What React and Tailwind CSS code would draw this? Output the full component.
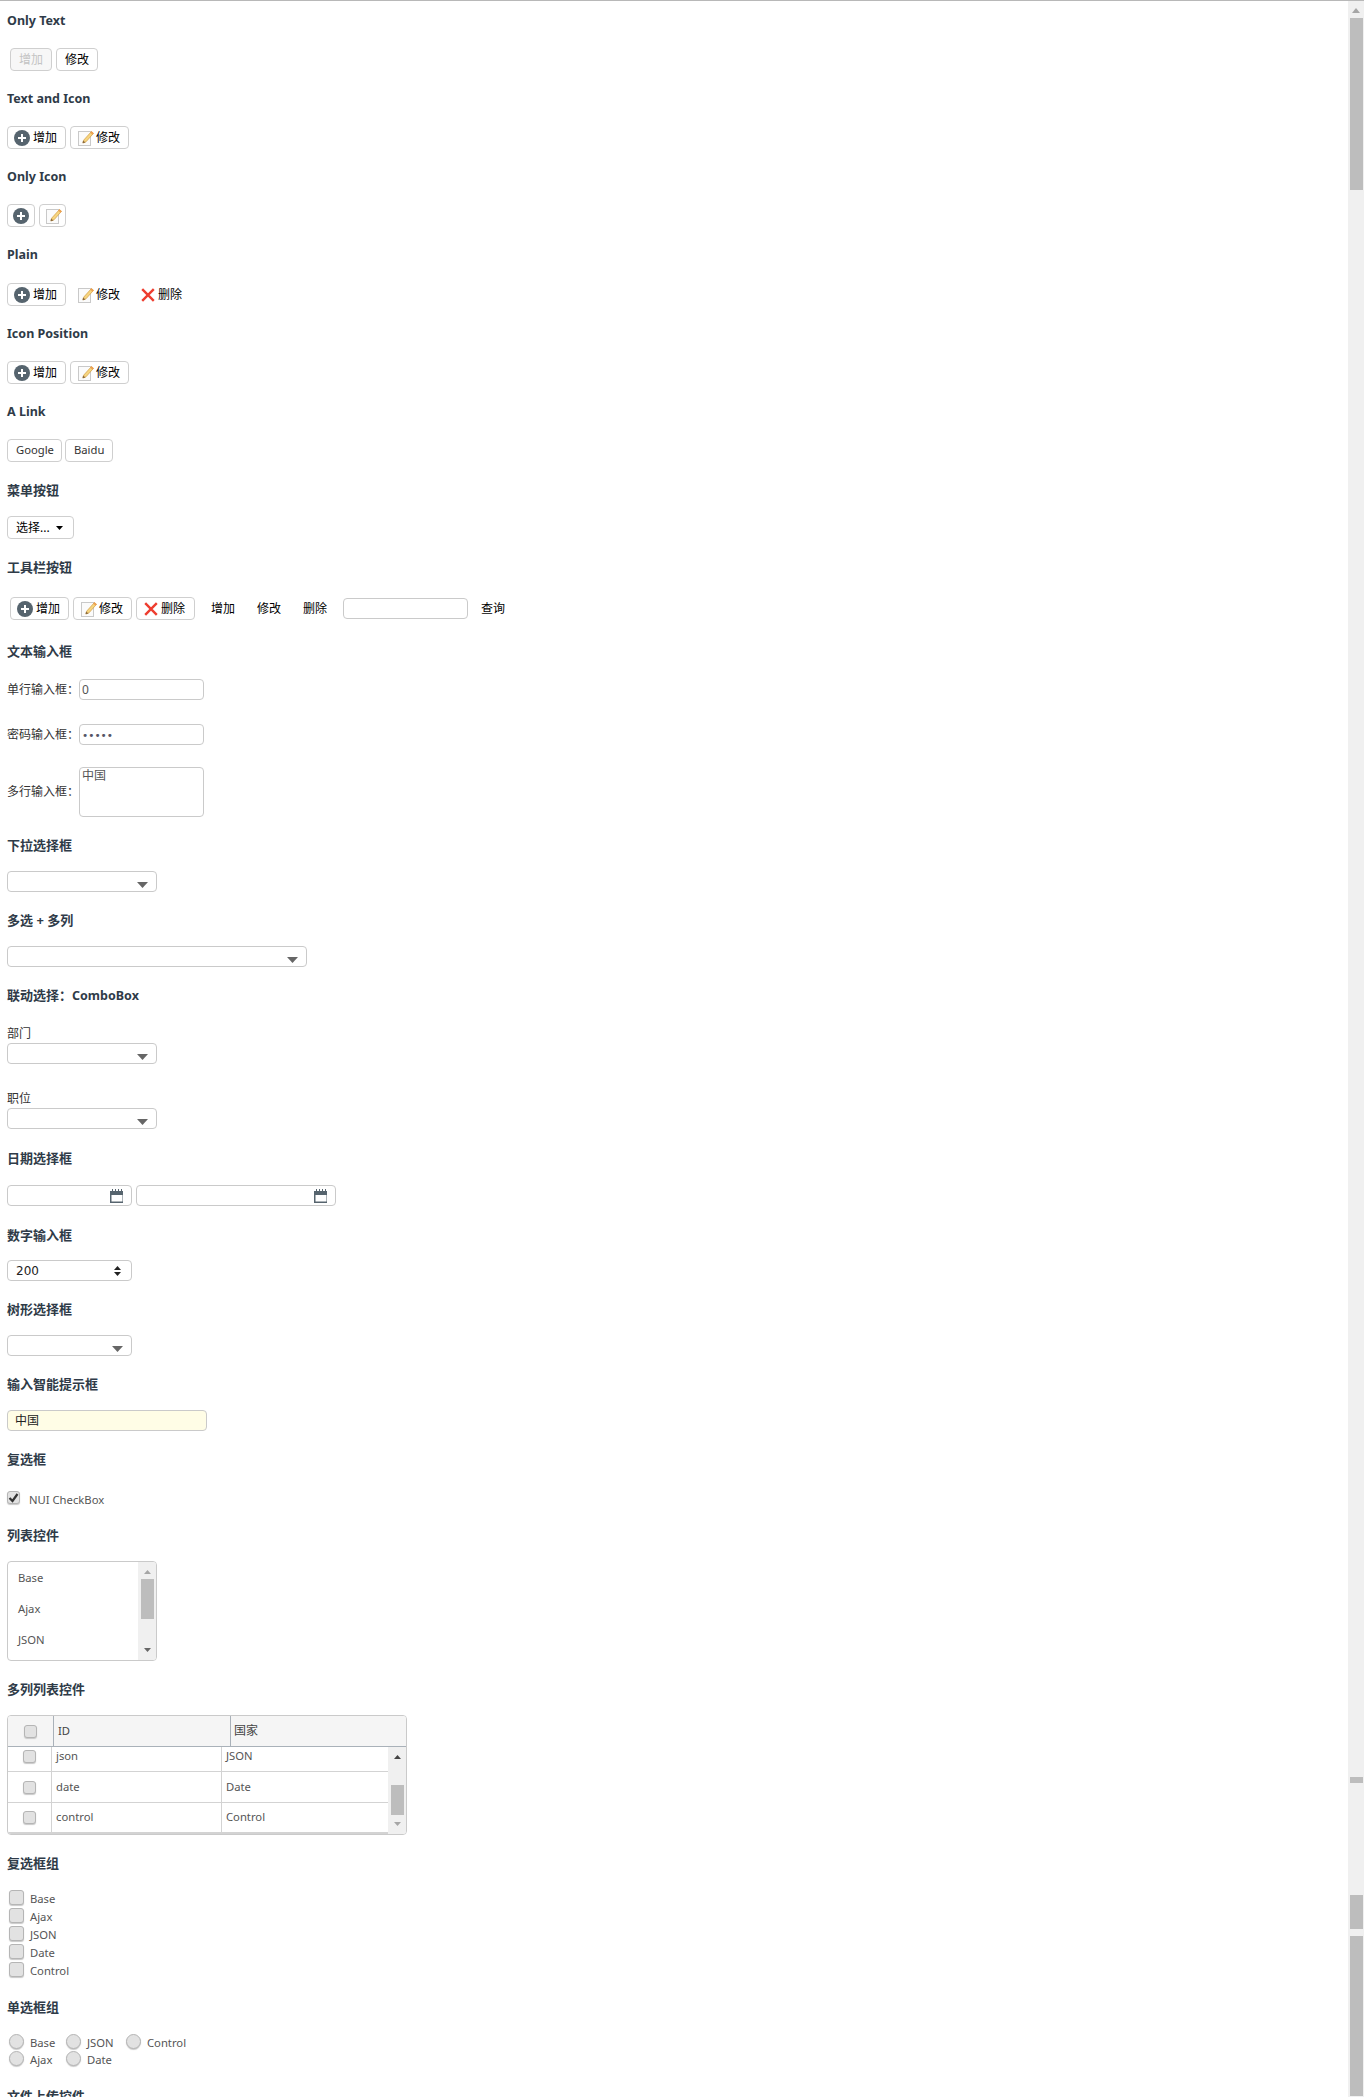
import React from "react";

const T = ({ c = "mt-[19px]", latin = false, children }) => (
  <h2 className={`h-4 font-bold text-[#2f3b48] ml-[7px] whitespace-nowrap ${latin ? "text-[12.5px] leading-[18px]" : "text-[13px] leading-[16px]"} ${c}`}>{children}</h2>
);

const AddIcon = () => (
  <svg width="16" height="16" viewBox="0 0 16 16" className="shrink-0">
    <circle cx="8" cy="8" r="8" fill="#56646e" />
    <path d="M8 4v8M4 8h8" stroke="#fff" strokeWidth="2" />
  </svg>
);
const EditIcon = () => (
  <svg width="16" height="16" viewBox="0 0 16 16" className="shrink-0">
    <rect x="0.5" y="1.5" width="12" height="14" fill="#fbfbfb" stroke="#c9c9c9" />
    <path d="M13.5 1.5l2 1.8-7.5 8.5-3 1.2 0.8-3z" fill="#f6d57f" stroke="#d39b3e" strokeWidth="0.7" />
    <path d="M5 10.5l2.5 2-3 .8z" fill="#8a6a3c" />
    <path d="M13.3 1.2l2.4 2.1-1.2 1.4-2.4-2.1z" fill="#ee9f52" />
  </svg>
);
const DelIcon = () => (
  <svg width="14" height="14" viewBox="0 0 14 14" className="shrink-0">
    <path d="M1.2 1.2l11.6 11.6M12.8 1.2L1.2 12.8" stroke="#ee3d2f" strokeWidth="2.4" />
  </svg>
);
const Calendar = () => (
  <svg width="14" height="14" viewBox="0 0 14 14" className="shrink-0">
    <path d="M0 2h2V0h1v2h2V0h1v2h2V0h1v2h2V0h1v2h1v12H0z" fill="#56646e" />
    <rect x="1.5" y="6" width="11" height="6.5" fill="#fff" />
  </svg>
);
const Tri = ({ w = 11, h = 6, up = false, fill = "#666" }) => (
  <svg width={w} height={h} viewBox={`0 0 ${w} ${h}`} className="shrink-0">
    <path d={up ? `M0 ${h}L${w / 2} 0L${w} ${h}z` : `M0 0L${w} 0L${w / 2} ${h}z`} fill={fill} />
  </svg>
);

const Btn = ({ w, children, plain = false, tone = "bg-white text-black", pl = "pl-[7px]" }) => (
  <button
    type="button"
    className={`h-[23px] rounded-[4px] border flex items-center shrink-0 text-[12px] ${w} ${pl} ${tone} ${
      plain ? "border-transparent" : "border-[#cfcfcf]"
    }`}
  >
    {children}
  </button>
);
const Add = ({ plain }) => (
  <Btn w="w-[59px]" pl="pl-[6px]" plain={plain}>
    <AddIcon />
    <span className="ml-[3px]">增加</span>
  </Btn>
);
const Edit = ({ plain }) => (
  <Btn w="w-[59px]" pl="pl-[7px]" plain={plain}>
    <EditIcon />
    <span className="ml-[2px]">修改</span>
  </Btn>
);
const Del = ({ plain }) => (
  <Btn w="w-[59px]" pl="pl-[7px]" plain={plain}>
    <DelIcon />
    <span className="ml-[3px]">删除</span>
  </Btn>
);

const Box = ({ w, bg = "bg-white", c = "", children }) => (
  <div className={`h-[21px] rounded-[4px] border border-[#cacaca] flex items-center shrink-0 text-[12px] ${w} ${bg} ${c}`}>
    {children}
  </div>
);
const Combo = ({ w, c = "ml-[7px]" }) => (
  <Box w={w} c={`${c} justify-end pr-[8px] pt-[7px]`}>
    <Tri />
  </Box>
);

const Check = ({ size = "w-[13px] h-[13px]", radius = "rounded-[3px]", children }) => (
  <span className={`${size} ${radius} shrink-0 border border-[#b5b5b5] bg-[#e2e2e2] shadow-[0_1px_1px_#c9c9c9] flex items-center justify-center`}>
    {children}
  </span>
);

const Bar = ({ top, thumb, upFill = "#a6a6a6", downFill = "#666" }) => (
  <div className={`w-[18px] shrink-0 bg-[#f0f0f0] flex flex-col items-center ${top}`}>
    <Tri w={7} h={4} up fill={upFill} />
    <div className={`w-[13px] bg-[#bdbdbd] ${thumb}`} />
    <div className="flex-1" />
    <div className="mb-[8px]">
      <Tri w={7} h={4} fill={downFill} />
    </div>
  </div>
);

const GridRow = ({ h, id, name, pt = "items-center", border = "border-b border-[#d3d3d3]" }) => (
  <div className={`flex ${h} ${border} text-[11.25px] text-[#555]`}>
    <div className={`w-[44px] flex ${pt} pl-[15px] border-r border-[#d3d3d3]`}>
      <Check />
    </div>
    <div className={`w-[170px] flex ${pt} pl-[4px] border-r border-[#d3d3d3]`}>{id}</div>
    <div className={`flex-1 flex ${pt} pl-[4px]`}>{name}</div>
  </div>
);

const CheckRow = ({ label }) => (
  <div className="h-[18px] flex items-start ml-[9px] text-[11.25px] text-[#555]">
    <Check size="w-[15px] h-[15px]" />
    <span className="ml-[6px] leading-[18px]">{label}</span>
  </div>
);
const Radio = ({ label }) => (
  <div className="h-[17px] flex items-start text-[11.25px] text-[#555]">
    <Check size="w-[15px] h-[15px]" radius="rounded-full" />
    <span className="ml-[6px] leading-[17px]">{label}</span>
  </div>
);

export default function App() {
  return (
    <div className="h-[2097px] overflow-hidden bg-white border-t border-[#b8b8b8] flex font-['Noto_Sans','Noto_Sans_CJK_SC',sans-serif] text-[12px]">
      <main className="flex-1 min-w-0">
        <T latin c="mt-[11px]">Only Text</T>
        <div className="mt-[20px] ml-[10px] flex gap-[4px]">
          <Btn w="w-[42px]" pl="pl-[8px]" tone="bg-[#f7f7f7] text-[#c4c4c4]">增加</Btn>
          <Btn w="w-[42px]" pl="pl-[8px]">修改</Btn>
        </div>

        <T latin>Text and Icon</T>
        <div className="mt-[20px] ml-[7px] flex gap-[4px]">
          <Add />
          <Edit />
        </div>

        <T latin>Only Icon</T>
        <div className="mt-[20px] ml-[7px] flex gap-[4px]">
          <Btn w="w-[28px]" pl="pl-[5px]"><AddIcon /></Btn>
          <Btn w="w-[27px]" pl="pl-[6px]"><EditIcon /></Btn>
        </div>

        <T latin>Plain</T>
        <div className="mt-[21px] ml-[7px] flex gap-[4px]">
          <Add />
          <Edit plain />
          <Del plain />
        </div>

        <T latin>Icon Position</T>
        <div className="mt-[20px] ml-[7px] flex gap-[4px]">
          <Add />
          <Edit />
        </div>

        <T latin>A Link</T>
        <div className="mt-[20px] ml-[7px] flex gap-[3px]">
          <Btn w="w-[55px]" pl="pl-[8px]"><span className="text-[11.25px] text-[#333]">Google</span></Btn>
          <Btn w="w-[48px]" pl="pl-[8px]"><span className="text-[11.25px] text-[#333]">Baidu</span></Btn>
        </div>

        <T c="mt-[20px]">菜单按钮</T>
        <div className="mt-[18px] ml-[7px] flex">
          <Btn w="w-[67px]" pl="pl-[8px]">
            <span>选择...</span>
            <span className="ml-[6px]"><Tri w={7} h={4} fill="#000" /></span>
          </Btn>
        </div>

        <T c="mt-[20px]">工具栏按钮</T>
        <div className="mt-[22px] ml-[10px] flex items-center gap-[4px]">
          <Add />
          <Edit />
          <Del />
          <span className="ml-[12px] w-[24px]">增加</span>
          <span className="ml-[18px] w-[24px]">修改</span>
          <span className="ml-[18px] w-[24px]">删除</span>
          <input readOnly className="ml-[12px] w-[125px] h-[21px] rounded-[4px] border border-[#cacaca] bg-white outline-none" />
          <span className="ml-[9px]">查询</span>
        </div>

        <T c="mt-[23px]">文本输入框</T>
        <div className="mt-[20px] ml-[7px] flex items-center text-[#333]">
          <span className="w-[72px]">单行输入框：</span>
          <input
            readOnly
            defaultValue="0"
            className="w-[125px] h-[21px] rounded-[4px] border border-[#cacaca] bg-white px-[2px] text-[12px] text-[#555] outline-none"
          />
        </div>
        <div className="mt-[24px] ml-[7px] flex items-center text-[#333]">
          <span className="w-[72px]">密码输入框：</span>
          <input
            readOnly
            type="password"
            defaultValue="12345"
            className="w-[125px] h-[21px] rounded-[4px] border border-[#cacaca] bg-white px-[2px] font-['DejaVu_Sans',sans-serif] text-[10.5px] text-[#556] outline-none"
          />
        </div>
        <div className="mt-[22px] ml-[7px] flex items-center text-[#333]">
          <span className="w-[72px]">多行输入框：</span>
          <textarea
            readOnly
            defaultValue="中国"
            className="w-[125px] h-[50px] rounded-[4px] border border-[#cacaca] bg-white px-[2px] text-[12px] leading-[16px] text-[#555] outline-none resize-none block"
          />
        </div>

        <T c="mt-[20px]">下拉选择框</T>
        <div className="mt-[18px] flex"><Combo w="w-[150px]" /></div>

        <T c="mt-[20px]">多选&nbsp;+&nbsp;多列</T>
        <div className="mt-[18px] flex"><Combo w="w-[300px]" /></div>

        <T c="mt-[20px]">联动选择：<span className="text-[12.5px]">ComboBox</span></T>
        <div className="mt-[20px] ml-[7px] h-5 leading-[22px] text-[#333]">部门</div>
        <div className="flex"><Combo w="w-[150px]" /></div>
        <div className="mt-[24px] ml-[7px] h-5 leading-[22px] text-[#333]">职位</div>
        <div className="flex"><Combo w="w-[150px]" /></div>

        <T c="mt-[21px]">日期选择框</T>
        <div className="mt-[19px] ml-[7px] flex gap-[4px]">
          <Box w="w-[125px]" c="justify-end pr-[7px]"><Calendar /></Box>
          <Box w="w-[200px]" c="justify-end pr-[7px]"><Calendar /></Box>
        </div>

        <T c="mt-[21px]">数字输入框</T>
        <div className="mt-[17px] ml-[7px] flex">
          <Box w="w-[125px]" c="pl-[8px] pr-[10px] justify-between">
            <span className="font-['DejaVu_Sans',sans-serif] text-[#222]">200</span>
            <span className="flex flex-col gap-[2px]">
              <Tri w={7} h={4} up fill="#222" />
              <Tri w={7} h={4} fill="#222" />
            </span>
          </Box>
        </div>

        <T c="mt-[20px]">树形选择框</T>
        <div className="mt-[18px] flex"><Combo w="w-[125px]" /></div>

        <T c="mt-[20px]">输入智能提示框</T>
        <div className="mt-[18px] ml-[7px] flex">
          <Box w="w-[200px]" bg="bg-[#fffde6]" c="pl-[7px] text-[#222]">中国</Box>
        </div>

        <T c="mt-[20px]">复选框</T>
        <div className="mt-[24px] ml-[7px] h-[17px] flex items-start text-[11.25px] text-[#555]">
          <Check>
            <svg width="11" height="10" viewBox="0 0 11 10">
              <path d="M1.5 5l3 3 5-7" fill="none" stroke="#333" strokeWidth="2.2" />
            </svg>
          </Check>
          <span className="ml-[9px] leading-[18px]">NUI CheckBox</span>
        </div>

        <T>列表控件</T>
        <div className="mt-[18px] ml-[7px] w-[150px] h-[100px] rounded-[4px] border border-[#cacaca] flex overflow-hidden">
          <div className="flex-1 text-[11.25px] text-[#555] pl-[10px]">
            <div className="h-[31px] leading-[31px]">Base</div>
            <div className="h-[31px] leading-[31px]">Ajax</div>
            <div className="h-[31px] leading-[31px]">JSON</div>
          </div>
          <Bar top="pt-[8px]" thumb="mt-[5px] h-[40px]" />
        </div>

        <T c="mt-[20px]">多列列表控件</T>
        <div className="mt-[18px] ml-[7px] w-[400px] h-[120px] rounded-[4px] border border-[#cacaca] overflow-hidden">
          <div className="h-[31px] flex bg-[#f5f5f5] border-b border-[#a9b1b9] text-[#444]">
            <div className="w-[46px] flex items-center pl-[16px] border-r border-[#a9b1b9]">
              <Check />
            </div>
            <div className="w-[177px] flex items-center pl-[4px] border-r border-[#a9b1b9] text-[11.25px]">ID</div>
            <div className="flex-1 flex items-center pl-[3px]">国家</div>
          </div>
          <div className="flex h-[87px]">
            <div className="flex-1 min-w-0">
              <GridRow h="h-[25px]" id="json" name="JSON" pt="items-center pb-[5px]" />
              <GridRow h="h-[31px]" id="date" name="Date" />
              <GridRow h="h-[31px]" id="control" name="Control" border="border-b-2 border-[#d3d3d3]" />
            </div>
            <Bar top="pt-[8px]" thumb="mt-[26px] h-[30px]" upFill="#444" downFill="#a6a6a6" />
          </div>
        </div>

        <T c="mt-[20px]">复选框组</T>
        <div className="mt-[19px]">
          <CheckRow label="Base" />
          <CheckRow label="Ajax" />
          <CheckRow label="JSON" />
          <CheckRow label="Date" />
          <CheckRow label="Control" />
        </div>

        <T>单选框组</T>
        <div className="mt-[19px] ml-[9px] grid grid-cols-[57px_60px_auto] w-[240px]">
          <Radio label="Base" />
          <Radio label="JSON" />
          <Radio label="Control" />
          <Radio label="Ajax" />
          <Radio label="Date" />
        </div>

        <T c="mt-[20px]">文件上传控件</T>
      </main>

      <aside className="w-[16px] shrink-0 bg-[#f0f0f0] flex flex-col items-center">
        <div className="mt-[7px]"><Tri w={8} h={5} up fill="#a6a6a6" /></div>
        <div className="mt-[5px] w-[13px] h-[172px] bg-[#bdbdbd]" />
        <div className="mt-[1587px] w-[13px] h-[6px] bg-[#bdbdbd]" />
        <div className="mt-[112px] w-[13px] h-[34px] bg-[#bdbdbd]" />
        <div className="mt-[7px] w-[13px] h-[160px] bg-[#bdbdbd]" />
      </aside>
    </div>
  );
}
